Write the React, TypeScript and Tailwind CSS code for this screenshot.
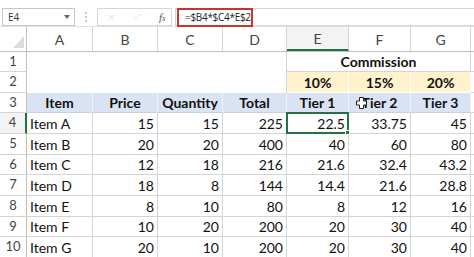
import { Fragment } from "react";
import { X, Check } from "lucide-react";

const COLS = "grid grid-cols-[27px_66px_65px_65px_64px_62px_62px_60px_1fr]";
const FONT = { fontFamily: "Lato, 'Open Sans', sans-serif" };

type Row = [string, string, string, string, string, string, string];

const data: Row[] = [
  ["Item A", "15", "15", "225", "22.5", "33.75", "45"],
  ["Item B", "20", "20", "400", "40", "60", "80"],
  ["Item C", "12", "18", "216", "21.6", "32.4", "43.2"],
  ["Item D", "18", "8", "144", "14.4", "21.6", "28.8"],
  ["Item E", "8", "10", "80", "8", "12", "16"],
  ["Item F", "10", "20", "200", "20", "30", "40"],
  ["Item G", "20", "10", "200", "20", "30", "40"],
];

function RowHead({ n, selected }: { n: number; selected?: boolean }) {
  return (
    <div
      className={`flex items-center justify-center border-b border-[#d4d4d4] text-[13px] text-[#444] ${
        selected ? "border-r-2 border-r-[#217346] bg-[#f3f3f3]" : "border-r border-r-[#bfbfbf]"
      }`}
    >
      {n}
    </div>
  );
}

function Cell({ children, className = "" }: { children?: React.ReactNode; className?: string }) {
  return (
    <div className={`flex items-end overflow-visible whitespace-nowrap border-b border-r border-[#d4d4d4] px-[3px] pb-[1px] text-[14px] leading-[17px] text-[#111] ${className}`}>
      {children}
    </div>
  );
}

function Cursor() {
  return (
    <svg className="absolute left-[7px] top-[4px]" width="11" height="12" viewBox="0 0 11 12">
      <path d="M3.5 0.5h4v3.5h3v4h-3v3.5h-4v-3.5h-3v-4h3z" fill="#fff" stroke="#222" strokeWidth="1" />
    </svg>
  );
}

export default function App() {
  return (
    <div className="h-[257px] w-[474px] overflow-hidden bg-white" style={FONT}>
      {/* formula bar */}
      <div className="flex h-[27px] items-start pt-[8px] pl-[2px] border-b border-[#e1e1e1]">
        <div className="flex h-[18px] w-[73px] items-center justify-between border border-[#c6c6c6] pl-[5px] pr-[4px] text-[10px] text-[#333]" style={{ fontFamily: "'Open Sans', sans-serif" }}>
          <span>E4</span>
          <svg width="6" height="4" viewBox="0 0 6 4">
            <path d="M0 0h6L3 4z" fill="#666" />
          </svg>
        </div>
        <div className="flex w-[22px] flex-col items-center gap-[2px] pt-[4px]">
          <span className="h-[2px] w-[2px] bg-[#c8c8c8]" />
          <span className="h-[2px] w-[2px] bg-[#c8c8c8]" />
          <span className="h-[2px] w-[2px] bg-[#c8c8c8]" />
        </div>
        <div className="flex h-[18px] w-[75px] items-center border border-[#d6d6d6] pl-[9px]">
          <X size={9} strokeWidth={1.5} color="#c4c4c4" />
          <Check size={10} strokeWidth={1.5} color="#c4c4c4" className="ml-[16px]" />
          <span className="ml-[17px] text-[11px] italic text-[#555]" style={{ fontFamily: "'Liberation Serif', serif" }}>
            f<span className="text-[8px]">x</span>
          </span>
        </div>
        <div className="ml-[3px] flex h-[18px] flex-1 items-start border-y border-l border-[#d6d6d6]">
          <span className="-mt-[1px] ml-[1px] flex h-[19px] w-[76px] items-center whitespace-nowrap border-2 border-[#d0312d] pl-[6px] text-[10px] tracking-[-0.3px] text-[#222]" style={{ fontFamily: "'Open Sans', sans-serif" }}>
            =$B4*$C4*E$2
          </span>
        </div>
      </div>

      {/* column headers */}
      <div className={`${COLS} h-[25px] border-b border-[#bfbfbf] text-[14px] text-[#444]`}>
        <div className="relative border-r border-[#bfbfbf]">
          <svg className="absolute bottom-[3px] right-[2px]" width="11" height="12" viewBox="0 0 11 12">
            <path d="M11 0v12H0z" fill="#dcdcdc" />
          </svg>
        </div>
        {["A", "B", "C", "D"].map((c) => (
          <div key={c} className="flex items-center justify-center border-r border-[#d4d4d4]">{c}</div>
        ))}
        <div className="flex items-center justify-center border-b-2 border-r border-[#d4d4d4] border-b-[#217346] bg-[#f3f3f3]">E</div>
        <div className="flex items-center justify-center border-r border-[#d4d4d4]">F</div>
        <div className="flex items-center justify-center border-r border-[#d4d4d4]">G</div>
        <div />
      </div>

      {/* sheet */}
      <div className={`${COLS} grid-rows-[20px_21px_20px_21px_21px_20px_21px_21px_20px_21px]`}>
        <RowHead n={1} />
        <div className="col-span-4 row-span-2 border-r border-[#d4d4d4] bg-white" />
        <Cell className="col-span-3 justify-center font-bold">Commission</Cell>
        <div className="border-b border-[#d4d4d4]" />

        <RowHead n={2} />
        {["10%", "15%", "20%"].map((p) => (
          <Cell key={p} className="justify-center bg-[#fff2cc] font-bold border-r-white border-b-white">{p}</Cell>
        ))}
        <div className="border-b border-[#d4d4d4]" />

        <RowHead n={3} />
        {["Item", "Price", "Quantity", "Total", "Tier 1", "Tier 2", "Tier 3"].map((h) => (
          <Cell key={h} className="relative justify-center bg-[#dae3f3] font-bold border-r-[#eef2f9] border-b-[#c9d1de]">
            {h === "Tier 2" && <Cursor />}
            {h}
          </Cell>
        ))}
        <div className="border-b border-[#d4d4d4]" />

        {data.map((r, i) => (
          <Fragment key={i}>
            <RowHead n={i + 4} selected={i === 0} />
            <Cell>{r[0]}</Cell>
            {r.slice(1).map((v, j) =>
              i === 0 && j === 3 ? (
                <div key={j} className="relative -ml-[1px] -mt-[1px] flex items-end justify-end border-2 border-[#217346] px-[2px] text-[14px] leading-[17px] text-[#111]">
                  {v}
                  <span className="absolute -bottom-[3px] -right-[3px] h-[5px] w-[5px] border border-white bg-[#217346]" />
                </div>
              ) : (
                <Cell key={j} className="justify-end">{v}</Cell>
              )
            )}
            <div className="border-b border-[#d4d4d4]" />
          </Fragment>
        ))}
      </div>
    </div>
  );
}
